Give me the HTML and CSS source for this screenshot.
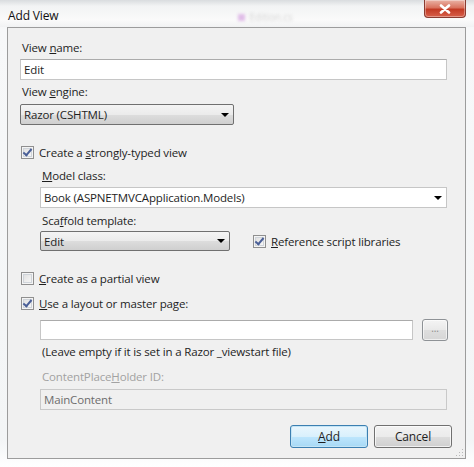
FILE: index.html
```html
<!DOCTYPE html>
<html>
<head>
	<meta charset="utf-8">
	<title>Add View</title>
	<link rel="stylesheet" href="styles.css">
</head>
<body>
	<div class="window">
		<div class="titlebar">
			<span class="title">Add View</span>
			<span class="ghost"><i></i>Edition.cs</span>
			<span class="close">
				<svg width="14" height="10" viewBox="0 0 14 10"><path d="M3 1.5 L11 8.5 M11 1.5 L3 8.5" stroke="#fff" stroke-width="2.6" stroke-linecap="round"/></svg>
			</span>
		</div>

		<div class="client">
			<div class="label first">View <u>n</u>ame:</div>
			<div class="field">Edit</div>

			<div class="label">View <u>e</u>ngine:</div>
			<div class="combo engine"><span>Razor (CSHTML)</span><b class="arrow"></b></div>

			<div class="check big-gap">
				<span class="box on"></span>
				<span>Create a <u>s</u>trongly-typed view</span>
			</div>

			<div class="sub">
				<div class="label model"><u>M</u>odel class:</div>
				<div class="field combo-edit"><span>Book (ASPNETMVCApplication.Models)</span><b class="arrow"></b></div>

				<div class="label scaffold">Sca<u>f</u>fold template:</div>
				<div class="row">
					<div class="combo scaf"><span>Edit</span><b class="arrow"></b></div>
					<div class="check inline">
						<span class="box on"></span>
						<span><u>R</u>eference script libraries</span>
					</div>
				</div>
			</div>

			<div class="check partial">
				<span class="box"></span>
				<span><u>C</u>reate as a partial view</span>
			</div>

			<div class="check layout">
				<span class="box on"></span>
				<span><u>U</u>se a layout or master page:</span>
			</div>

			<div class="sub">
				<div class="row browse">
					<div class="field grow"></div>
					<span class="dots">...</span>
				</div>
				<div class="hint">(Leave empty if it is set in a Razor _viewstart file)</div>

				<div class="label disabled">ContentPlace<u>H</u>older ID:</div>
				<div class="field off">MainContent</div>
			</div>

			<div class="buttons">
				<span class="btn default"><u>A</u>dd</span>
				<span class="btn">Cancel</span>
			</div>
			<span class="grip"></span>
		</div>
	</div>
</body>
</html>
```

FILE: styles.css
```css
*{margin:0;padding:0;box-sizing:border-box;}
body{
	background:#fff;
	font-family:"Open Sans","Noto Sans",sans-serif;
	font-size:11.5px;
	letter-spacing:-0.15px;
	color:#1e1e1e;
}
u{text-decoration:underline;text-underline-offset:1px;}
.window{
	width:474px;
	height:467px;
	background:linear-gradient(#e9ecef,#f7f8f9 30px,#f3f5f6 440px,#fff);
	overflow:hidden;
}

/* title bar */
.titlebar{
	height:27px;
	display:flex;
	align-items:flex-start;
	background:linear-gradient(#d9dcdf,#f2f3f4 6px,#fafafa 20px,#f1f2f3);
}
.title{
	padding:7px 0 0 8px;
	font-size:12px;
	color:#111;
}
.ghost{
	margin:10px 0 0 180px;
	color:#d6d6d6;
	font-size:10px;
	filter:blur(1.4px);
	display:flex;
	align-items:center;
	gap:4px;
}
.ghost i{
	display:block;
	width:7px;
	height:7px;
	background:#e0bde8;
}
.close{
	margin-left:auto;
	margin-right:8px;
	width:42px;
	height:18px;
	border:1px solid #8a3b30;
	border-top:none;
	border-radius:0 0 4px 4px;
	background:linear-gradient(#eab3a6,#d9735f 45%,#c23a24 55%,#d8604a);
	display:flex;
	align-items:center;
	justify-content:center;
	box-shadow:inset 0 0 0 1px rgba(255,255,255,.35);
}

/* client area */
.client{
	position:relative;
	margin-left:7px;
	width:459px;
	height:432px;
	background:#f0f0f0;
	border:1px solid #9c9c9c;
	padding:0 18px 0 12px;
}
.label{
	height:16px;
	line-height:16px;
	padding-left:2px;
	margin-top:4px;
}
.label.first{margin-top:12px;}
.field{
	margin-top:3px;
	height:21px;
	line-height:19px;
	border:1px solid #c6c6c6;
	border-top-color:#ababab;
	background:#fff;
	padding-left:3px;
}
.combo{
	margin-top:4px;
	height:21px;
	line-height:19px;
	border:1px solid #707070;
	border-radius:2px;
	background:linear-gradient(#f4f4f4,#ebebeb 50%,#dddddd 51%,#cfcfcf);
	padding-left:3px;
	display:flex;
	align-items:center;
}
.combo span,.combo-edit span{flex:1;}
.arrow{
	display:block;
	width:0;
	height:0;
	border-left:4px solid transparent;
	border-right:4px solid transparent;
	border-top:4px solid #000;
	margin-right:4px;
}
.engine{width:214px;}
.combo-edit{
	display:flex;
	align-items:center;
	border-color:#c6c6c6;
}

/* checkboxes */
.check{
	display:flex;
	align-items:center;
	gap:5px;
	height:16px;
	padding-left:1px;
}
.big-gap{margin-top:19px;}
.box{
	width:13px;
	height:13px;
	border:1px solid #8f8f8f;
	background:linear-gradient(135deg,#dcdcdc,#fbfbfb);
	box-shadow:inset 0 0 0 1px #f4f4f4,inset 0 0 0 2px #cfd4da;
	display:block;
	position:relative;
}
.box.on::after{
	content:"";
	position:absolute;
	left:3px;
	top:0px;
	width:3px;
	height:7px;
	border:solid #4a5f97;
	border-width:0 2px 2px 0;
	transform:rotate(40deg);
}

.sub{padding-left:20px;}
.label.model{margin-top:8px;}
.label.scaffold{margin-top:5px;}
.row{
	display:flex;
	align-items:center;
	margin-top:2px;
}
.scaf{width:190px;margin-top:0;height:20px;}
.check.inline{margin-left:22px;}
.partial{margin-top:19px;}
.layout{margin-top:9px;}

.browse{margin-top:8px;height:22px;}
.grow{flex:1;margin-top:0;height:20px;}
.dots{
	width:26px;
	height:22px;
	margin-left:9px;
	margin-right:-1px;
	border:1px solid #8e9296;
	border-radius:3px;
	background:linear-gradient(#f4f4f4,#e9e9e9 50%,#dedede 51%,#d6d6d6);
	box-shadow:inset 0 0 0 1px rgba(255,255,255,.6);
	color:#8c8c8c;
	font-size:10px;
	text-align:center;
	line-height:16px;
}
.hint{
	height:16px;
	line-height:16px;
	margin-top:3px;
	padding-left:2px;
}
.label.disabled{
	margin-top:9px;
	color:#a2a2a2;
}
.field.off{
	margin-top:4px;
	background:#f0f0f0;
	border-color:#c9c9c9;
	color:#6d6d6d;
}

/* buttons */
.buttons{
	display:flex;
	justify-content:flex-end;
	gap:6px;
	margin-top:15px;
	margin-right:-5px;
}
.btn{
	width:78px;
	height:23px;
	line-height:21px;
	text-align:center;
	font-size:12px;
	border:1px solid #707070;
	border-radius:3px;
	background:linear-gradient(#f2f2f2,#ebebeb 50%,#dddddd 51%,#cfcfcf);
	box-shadow:inset 0 0 0 1px rgba(255,255,255,.7);
}
.btn.default{
	border-color:#3c7fb1;
	background:linear-gradient(#eaf6fd,#d9f0fc 50%,#bee6fd 51%,#a7d9f5);
	box-shadow:inset 0 0 0 1px #c4e5f6;
}
.grip{
	position:absolute;
	right:2px;
	bottom:2px;
	width:8px;
	height:8px;
	background:radial-gradient(circle,#b8b8b8 0.8px,transparent 1px) 0 0/3px 3px;
	clip-path:polygon(100% 0,100% 100%,0 100%);
}
```
